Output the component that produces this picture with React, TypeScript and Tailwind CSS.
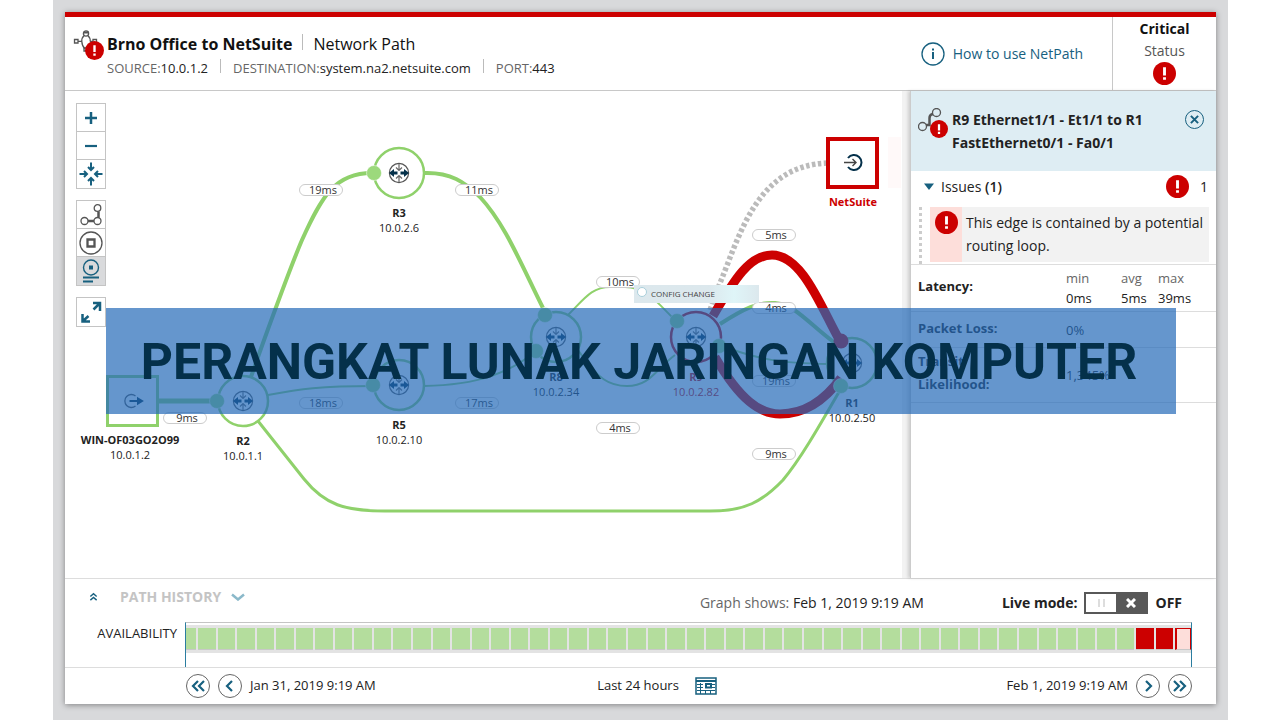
import { ReactNode } from "react";
import clsx from "clsx";

type Tone = "ok" | "critical";

interface RouterNode {
  name: string;
  ip: string;
  x: number;
  y: number;
  tone?: Tone;
}

// All map coordinates are relative to the map canvas
const ROUTERS: RouterNode[] = [
  { name: "R3", ip: "10.0.2.6", x: 334, y: 82 },
  { name: "R2", ip: "10.0.1.1", x: 178, y: 310 },
  { name: "R5", ip: "10.0.2.10", x: 334, y: 294 },
  { name: "R8", ip: "10.0.2.34", x: 491, y: 246 },
  { name: "R9", ip: "10.0.2.82", x: 631, y: 246, tone: "critical" },
  { name: "R1", ip: "10.0.2.50", x: 787, y: 272 },
];

const LATENCIES = [
  { text: "19ms", x: 256, y: 99 },
  { text: "11ms", x: 412, y: 99 },
  { text: "10ms", x: 553, y: 191 },
  { text: "5ms", x: 709, y: 144 },
  { text: "4ms", x: 709, y: 217 },
  { text: "19ms", x: 709, y: 290 },
  { text: "9ms", x: 709, y: 363 },
  { text: "4ms", x: 553, y: 337 },
  { text: "17ms", x: 412, y: 312 },
  { text: "18ms", x: 256, y: 312 },
  { text: "9ms", x: 120, y: 327 },
];

const GREEN_EDGES = [
  { d: "M186 286C197 254 225 177 237 149C257 105 270 82 307 82", w: 4 },
  { d: "M359 82C385 81 400 91 415 106C440 133 455 171 478 217", w: 4 },
  { d: "M94 310H152", w: 5 },
  { d: "M203 304C235 298 255 295 309 295", w: 2 },
  { d: "M359 295C415 294 445 281 470 261", w: 2 },
  { d: "M503 224C520 207 527 196 545 196H560C580 196 590 209 607 226", w: 2 },
  { d: "M513 259C533 289 545 295 562 295C585 295 590 279 610 264", w: 2 },
  { d: "M655 233C680 217 693 211 710 212C730 213 745 234 770 252", w: 4 },
  { d: "M657 255C695 269 715 272 763 273", w: 2 },
  { d: "M193 330L239 388C260 414 280 420 320 420H645C680 420 697 411 718 389C735 369 755 334 774 301", w: 3 },
];

const RED_EDGES = [
  "M648 225C670 187 685 164 707 164C738 164 757 219 775 250",
  "M650 266C675 309 695 323 715 323C740 323 760 309 776 287",
];

const DOTS = [
  [309, 82], [152, 310], [308, 294], [480, 224], [471, 260], [612, 230], [654, 255], [776, 295],
];

const CELLS = Array.from({ length: 50 }, (_, i) => (i < 48 ? "up" : "down"));

function Alert({ className }: { className?: string }) {
  return (
    <svg viewBox="0 0 24 24" className={clsx("shrink-0", className)} aria-hidden="true">
      <circle cx="12" cy="12" r="12" fill="#cc0000" />
      <path d="M10.5 5.5h3v8.5h-3zM10.5 15.8h3v2.7h-3z" fill="#fff" />
    </svg>
  );
}

function RouterIcon() {
  return (
    <svg viewBox="0 0 22 22" className="size-[22px]" aria-hidden="true">
      <circle cx="11" cy="11" r="9.6" fill="#fff" stroke="#555" strokeWidth="1.2" />
      <path d="M1 11l5-4v2.500h3.500v3H6V15zM21 11l-5-4v2.500h-3.500v3H16V15z" fill="#04304a" />
      <path d="M11 2v6M8 5.500l3 3 3-3M11 20v-6M8 16.500l3-3 3 3" fill="none" stroke="#666" strokeWidth="1.200" />
    </svg>
  );
}

function ToolButton({ label, active, children }: { label: string; active?: boolean; children: ReactNode }) {
  return (
    <button
      aria-label={label}
      className={clsx("flex h-[28px] w-full items-center justify-center", active ? "bg-[#d9dadc]" : "bg-white")}
    >
      <svg viewBox="0 0 24 24" className="size-6" fill="none" stroke="#17607f" strokeWidth="2">
        {children}
      </svg>
    </button>
  );
}

function RoundButton({ label, d }: { label: string; d: string }) {
  return (
    <button aria-label={label} className="flex size-6 items-center justify-center rounded-full border border-[#666]">
      <svg viewBox="0 0 24 24" className="size-6 shrink-0" fill="none" stroke="#17607f" strokeWidth="2.200">
        <path d={d} />
      </svg>
    </button>
  );
}

function Header() {
  return (
    <header className="flex h-[74px] border-b border-[#c8c8c8]">
      <div className="flex flex-1 pl-2 pt-[13px]">
        <div className="relative size-[34px] shrink-0">
          <svg viewBox="0 0 34 34" className="size-[34px]" fill="none" stroke="#555" strokeWidth="1.300" aria-hidden="true">
            <circle cx="13" cy="3.500" r="2.600" />
            <path d="M10.500 2.500h5" strokeWidth="2" />
            <path d="M11 5.800Q8.500 8 8.800 11.500Q9 16 12 19M15 5.800Q17.500 8 17.200 11.500" />
            <path d="M1.500 9.500h3.500v3.500H1.500zM20 9.500h3.500v3.500H20zM11 18h3v3h-3zM5 11.300h4M17 11.300h3" />
          </svg>
          <Alert className="absolute left-[12px] top-[11px] size-[19px]" />
        </div>
        <div className="pt-0.5">
          <div className="flex items-center text-base leading-6 text-[#111]">
            <h1 className="font-bold">Brno Office to NetSuite</h1>
            <span className="mx-[10px] mb-1 h-4 w-px bg-[#bbb]" />
            <span>Network Path</span>
          </div>
          <div className="flex items-center text-[13px] leading-6 text-[#222]">
            <span><span className="text-[#666]">SOURCE:</span>10.0.1.2</span>
            <span className="mx-3 mb-1 h-3.5 w-px bg-[#bbb]" />
            <span><span className="text-[#666]">DESTINATION:</span>system.na2.netsuite.com</span>
            <span className="mx-3 mb-1 h-3.5 w-px bg-[#bbb]" />
            <span><span className="text-[#666]">PORT:</span>443</span>
          </div>
        </div>
      </div>
      <a href="#help" className="mr-[29px] flex items-center gap-2 text-[14px] text-[#17607f]">
        <svg viewBox="0 0 24 24" className="size-6" fill="none" stroke="currentColor" aria-hidden="true">
          <circle cx="12" cy="12" r="11" strokeWidth="1.300" />
          <path d="M12 10v7M12 6.500v2" strokeWidth="2" />
        </svg>
        How to use NetPath
      </a>
      <div className="flex w-[104px] flex-col items-center border-l border-[#c8c8c8] text-[14px] text-[#555]">
        <strong className="leading-[23px] text-[#111]">Critical</strong>
        <span className="leading-[22px]">Status</span>
        <Alert className="size-[23px]" />
      </div>
    </header>
  );
}

function Toolbar() {
  return (
    <div className="absolute left-[11px] top-3 flex w-[30px] flex-col gap-[11px]">
      <div className="divide-y divide-[#c4c4c4] border border-[#c4c4c4]">
        <ToolButton label="Zoom in"><path d="M12 6v12M6 12h12" strokeWidth="2.500" /></ToolButton>
        <ToolButton label="Zoom out"><path d="M6 12h12" strokeWidth="2.200" /></ToolButton>
        <ToolButton label="Center">
          <path d="M12 0.500v7M9 5l3 3 3-3M12 23.500v-7M9 19l3-3 3 3M0.500 12h7M5 9l3 3-3 3M23.500 12h-7M19 9l-3 3 3 3" />
        </ToolButton>
      </div>
      <div className="divide-y divide-[#c4c4c4] border border-[#c4c4c4]">
        <ToolButton label="Show links">
          <g stroke="#555" strokeWidth="1.300">
            <circle cx="5.500" cy="18" r="3.500" /><circle cx="18.500" cy="18" r="3.500" /><circle cx="18.500" cy="5" r="3.300" />
            <path d="M9 18h6M19.500 8.500v6" strokeWidth="2.500" />
          </g>
        </ToolButton>
        <ToolButton label="Show nodes">
          <g stroke="#555"><circle cx="12" cy="12" r="11" strokeWidth="1.300" /><path d="M8.500 8.500h7v7h-7z" strokeWidth="2.300" /></g>
        </ToolButton>
        <ToolButton label="Show details" active>
          <circle cx="12" cy="8.500" r="7.500" strokeWidth="1.400" />
          <path d="M10 6.500h4v4h-4z" fill="#17607f" stroke="none" />
          <path d="M4 18.500h16M4 22.500h10" />
        </ToolButton>
      </div>
      <div className="border border-[#c4c4c4]">
        <ToolButton label="Full screen">
          <path d="M14 3h7v8M21 3l-6.500 6.500M3.500 14v7.500H11M4 21l5.500-5" strokeWidth="2.500" />
        </ToolButton>
      </div>
    </div>
  );
}

function NodeLabel({ name, ip, x, y, tone }: RouterNode) {
  return (
    <div
      className={clsx(
        "absolute flex w-[120px] -translate-x-1/2 flex-col items-center text-[11px] leading-[15px]",
        tone === "critical" ? "text-[#cc0000]" : "text-[#222]"
      )}
      style={{ left: x, top: y }}
    >
      <strong>{name}</strong>
      <span>{ip}</span>
    </div>
  );
}

function PathMap() {
  return (
    <main className="relative h-[487px] flex-1 overflow-hidden bg-white">
      <svg viewBox="0 0 837 487" className="absolute left-0 top-0 h-[487px] w-[837px]" fill="none" aria-hidden="true">
        <path d="M645 219L655 192C675 144 692 74 763 72" stroke="#bbb" strokeWidth="5.500" strokeDasharray="3.500 2.500" />
        {GREEN_EDGES.map((edge) => (
          <path key={edge.d} d={edge.d} stroke="#8fd16b" strokeWidth={edge.w} />
        ))}
        {ROUTERS.map((r) => (
          <circle
            key={r.name}
            cx={r.x}
            cy={r.y}
            r="25"
            fill="#fff"
            stroke={r.tone === "critical" ? "#cc0000" : "#8fd16b"}
            strokeWidth="2.500"
          />
        ))}
        {RED_EDGES.map((d) => (
          <path key={d} d={d} stroke="#cc0000" strokeWidth="9" />
        ))}
        {DOTS.map(([x, y]) => (
          <circle key={`${x}-${y}`} cx={x} cy={y} r="7.500" fill="#9cd97c" stroke="#fff" strokeWidth="0.500" />
        ))}
        <circle cx="776" cy="250" r="7.500" fill="#cc0000" />
        <path d="M823 46h13v51h-13z" fill="#fff9f9" />
      </svg>

      {ROUTERS.map((r) => (
        <div key={r.name}>
          <div className="absolute -translate-x-1/2 -translate-y-1/2" style={{ left: r.x, top: r.y }}>
            <RouterIcon />
          </div>
          <NodeLabel {...r} y={r.y + 32} />
        </div>
      ))}

      {/* Endpoints */}
      <div className="absolute left-[41px] top-[284px] flex h-[52px] w-[53px] items-center justify-center border-3 border-[#8fd16b] bg-white">
        <svg viewBox="0 0 22 22" className="size-[22px]" fill="none" aria-hidden="true">
          <path d="M13.500 6A6.500 6.500 0 1 0 13.500 16" stroke="#555" strokeWidth="1.300" />
          <path d="M7.500 11H17M16 8.500L20 11 16 13.500z" stroke="#04304a" strokeWidth="2" fill="#04304a" />
        </svg>
      </div>
      <NodeLabel name="WIN-OF03GO2O99" ip="10.0.1.2" x={65} y={341} />
      <div className="absolute left-[761px] top-[46px] flex h-[52px] w-[53px] items-center justify-center border-4 border-[#cc0000] bg-white">
        <svg viewBox="0 0 22 22" className="size-[22px]" fill="none" aria-hidden="true">
          <path d="M6 6A7.500 7.500 0 1 1 6 15" stroke="#04304a" strokeWidth="2" />
          <path d="M2 10.500H14M10.500 7L14 10.500 10.500 14" stroke="#444" strokeWidth="1.400" />
        </svg>
      </div>
      <strong className="absolute left-[788px] top-[103px] -translate-x-1/2 text-[11px] leading-[15px] text-[#cc0000]">
        NetSuite
      </strong>

      {LATENCIES.map((l) => (
        <span
          key={`${l.x}-${l.y}`}
          className="absolute flex h-3 w-11 -translate-x-1/2 -translate-y-1/2 items-center justify-center rounded-full border border-[#ccc] bg-white pl-1 text-[11px] text-[#333]"
          style={{ left: l.x, top: l.y }}
        >
          {l.text}
        </span>
      ))}

      <div className="absolute left-[569px] top-[194px] flex h-[18px] w-[125px] items-center gap-1 bg-linear-to-r from-[#dce8ed] from-60% via-[#dff5f8] via-80% to-[#dce8ed] pl-[3px] text-[8px] text-[#444]">
        <span className="mb-1 size-[10px] rounded-full border border-[#a9cfdb] bg-white" />
        CONFIG CHANGE
      </div>

      <Toolbar />
    </main>
  );
}

function DetailPanel() {
  return (
    <aside className="w-[306px] border-l border-[#ccc] bg-white text-[14px] text-[#222] shadow-[-2px_0_3px_rgba(0,0,0,0.15)]">
      <div className="flex h-20 items-start bg-[#deedf3] pl-[7px] pr-3 pt-[17px]">
        <div className="relative w-[34px] shrink-0">
          <svg viewBox="0 0 34 34" className="size-[34px]" fill="none" stroke="#555" strokeWidth="1.300" aria-hidden="true">
            <circle cx="4.500" cy="18.500" r="4" /><circle cx="18.500" cy="4.500" r="4" />
            <path d="M15 6q-3.500 0.500-3.500 4v7H8" strokeWidth="2.500" />
          </svg>
          <Alert className="absolute left-[12px] top-[12px] size-[18px]" />
        </div>
        <h2 className="flex-1 font-bold leading-[23px]">R9 Ethernet1/1 - Et1/1 to R1<br />FastEthernet0/1 - Fa0/1</h2>
        <button aria-label="Close" className="mt-0.5 flex size-[19px] items-center justify-center rounded-full border border-[#17607f]">
          <svg viewBox="0 0 10 10" className="size-[9px]" stroke="#17607f" strokeWidth="2.200"><path d="M1 1l8 8M9 1L1 9" /></svg>
        </button>
      </div>

      <div className="flex h-9 items-center pb-[5px] pl-3 pr-2">
        <button className="flex flex-1 items-center gap-[6px]">
          <svg viewBox="0 0 12 8" className="h-2 w-3"><path d="M1 0.500h10L6 7z" fill="#17607f" /></svg>
          <span>Issues <span className="font-semibold">(1)</span></span>
        </button>
        <Alert className="mr-[11px] size-[23px]" />
        <span>1</span>
      </div>

      <div className="flex h-[57px] pl-2 pr-[7px]">
        <div className="w-[11px] border-l-3 border-dotted border-[#ccc]" />
        <div className="mb-0.5 w-8 shrink-0 bg-[#fddeda] pt-1">
          <Alert className="mx-auto size-[23px]" />
        </div>
        <p className="mb-0.5 flex-1 bg-[#f2f2f2] pl-1 pt-1 leading-[23px]">This edge is contained by a potential routing loop.</p>
      </div>

      <table className="w-full table-fixed text-left text-[13px]">
        <colgroup>
          <col />
          <col className="w-[55px]" />
          <col className="w-[37px]" />
          <col className="w-[58px]" />
        </colgroup>
        <tbody className="leading-5 [&_tr]:border-t [&_tr]:border-[#ddd]">
          <tr className="h-[47px]">
            <th className="pb-1 pl-[7px]" scope="row">Latency:</th>
            {[["min", "0ms"], ["avg", "5ms"], ["max", "39ms"]].map(([k, v]) => (
              <td key={k}><span className="block text-[#666]">{k}</span>{v}</td>
            ))}
          </tr>
          <tr className="h-9">
            <th className="pb-1 pl-[7px]" scope="row">Packet Loss:</th>
            <td colSpan={3}>0%</td>
          </tr>
          <tr className="h-[55px] border-b">
            <th className="pb-1 pl-[7px] leading-[23px]" scope="row">Transit<br />Likelihood:</th>
            <td colSpan={3}>1,345%</td>
          </tr>
        </tbody>
      </table>
    </aside>
  );
}

function History() {
  return (
    <section className="border-t border-[#ddd]">
      <div className="flex h-[43px] items-center pl-6 pr-[34px] pt-1 text-[14px] text-[#222]">
        <button aria-label="Expand history" className="mb-3">
          <svg viewBox="0 0 10 10" className="size-[9px]" fill="none" stroke="#17607f" strokeWidth="1.600"><path d="M1.500 5L5 2l3.500 3M1.500 9L5 6l3.500 3" /></svg>
        </button>
        <button className="mb-3 ml-[22px] flex flex-1 items-center gap-[10px] font-bold text-[#c4c4c4]">
          PATH HISTORY
          <svg viewBox="0 0 14 8" className="h-2 w-[14px]" fill="none" stroke="#8bb9ca" strokeWidth="2.500"><path d="M1 1.500l6 5 6-5" /></svg>
        </button>
        <span className="mr-[78px]"><span className="text-[#666]">Graph shows: </span>Feb 1, 2019 9:19 AM</span>
        <strong id="live-mode">Live mode:</strong>
        <button role="switch" aria-checked="false" aria-labelledby="live-mode" className="mx-[7px] flex h-[22px] w-16 border-2 border-[#585858] bg-[#585858]">
          <span className="flex h-full w-[30px] items-center justify-center gap-[3px] bg-white">
            <span className="h-2 w-0.5 bg-[#ddd]" />
            <span className="h-2 w-0.5 bg-[#ddd]" />
          </span>
          <span className="flex h-full flex-1 items-center justify-center">
            <svg viewBox="0 0 10 10" className="size-[10px]" stroke="#fff" strokeWidth="3"><path d="M1 1l8 8M9 1L1 9" /></svg>
          </span>
        </button>
        <strong>OFF</strong>
      </div>

      <div className="flex h-[45px] pr-6">
        <span className="w-[120px] pr-2 pt-0.5 text-right text-[13px] text-[#222]">AVAILABILITY</span>
        <div className="flex-1 border-x border-t border-x-[#2b7da0] border-t-[#c4c4c4] pt-0.5">
          <div className="flex h-7 gap-[2px] bg-[#e3e3e3] py-[3px]">
            <span className="w-[10px] border-b border-[#c8c8c8] bg-[#b4dd9d]" />
            {CELLS.map((state, i) => (
              <span
                key={i}
                className={clsx("flex-1 border-b border-[#c8c8c8]", state === "up" ? "bg-[#b4dd9d]" : "bg-[#cc0000]")}
              />
            ))}
            <span className="w-4 border border-l-2 border-[#cc0000] border-b-[#c8c8c8] bg-[#fddeda]" />
          </div>
        </div>
      </div>

      <div className="flex h-[37px] items-center border-t border-[#ddd] pl-[121px] pr-6 text-[13px] text-[#222]">
        <div className="flex flex-1 items-center gap-2">
          <RoundButton label="First" d="M12 7l-5 5 5 5M18 7l-5 5 5 5" />
          <RoundButton label="Previous" d="M14 7l-5 5 5 5" />
          <span>Jan 31, 2019 9:19 AM</span>
        </div>
        <button className="mr-16 flex items-center gap-4">
          Last 24 hours
          <svg viewBox="0 0 22 18" className="h-[18px] w-[22px]" fill="none" stroke="#17607f" aria-hidden="true">
            <path d="M1 1h20v16H1z" strokeWidth="1.500" />
            <path d="M1 4h20" strokeWidth="2" />
            <path d="M2 7.500h6M2 10.500h6M2 13.500h18M17 7.500h3M17 10.500h3M5.500 6v11M10.500 13v4M15.500 13v4" />
            <path d="M11 7h5v3.500h-5z" strokeWidth="2" />
          </svg>
        </button>
        <div className="flex flex-1 items-center justify-end gap-2">
          <span>Feb 1, 2019 9:19 AM</span>
          <RoundButton label="Next" d="M10 7l5 5-5 5" />
          <RoundButton label="Last" d="M6 7l5 5-5 5M12 7l5 5-5 5" />
        </div>
      </div>
    </section>
  );
}

export default function App() {
  return (
    <div className="relative min-h-screen bg-white pl-[53px] pr-[52px] font-['Open_Sans',sans-serif]">
      <div className="min-h-screen bg-[#d8d9db] p-3 pb-4">
        <div className="border-t-5 border-[#cc0000] bg-white shadow-[0_1px_6px_rgba(0,0,0,0.4)]">
          <Header />
          <div className="flex">
            <PathMap />
            <div className="w-2 bg-[#f2f2f2]" />
            <DetailPanel />
          </div>
          <History />
        </div>
      </div>

      {/* Title banner */}
      <div className="absolute left-[106px] right-[104px] top-[308px] flex h-[106px] items-center justify-center bg-[#2469b8]/70 pr-1 pt-0.5 font-['Roboto',sans-serif] text-[50px] font-bold leading-none text-[#04304a]">
        <span className="whitespace-nowrap">PERANGKAT LUNAK JARINGAN KOMPUTER</span>
      </div>
    </div>
  );
}
